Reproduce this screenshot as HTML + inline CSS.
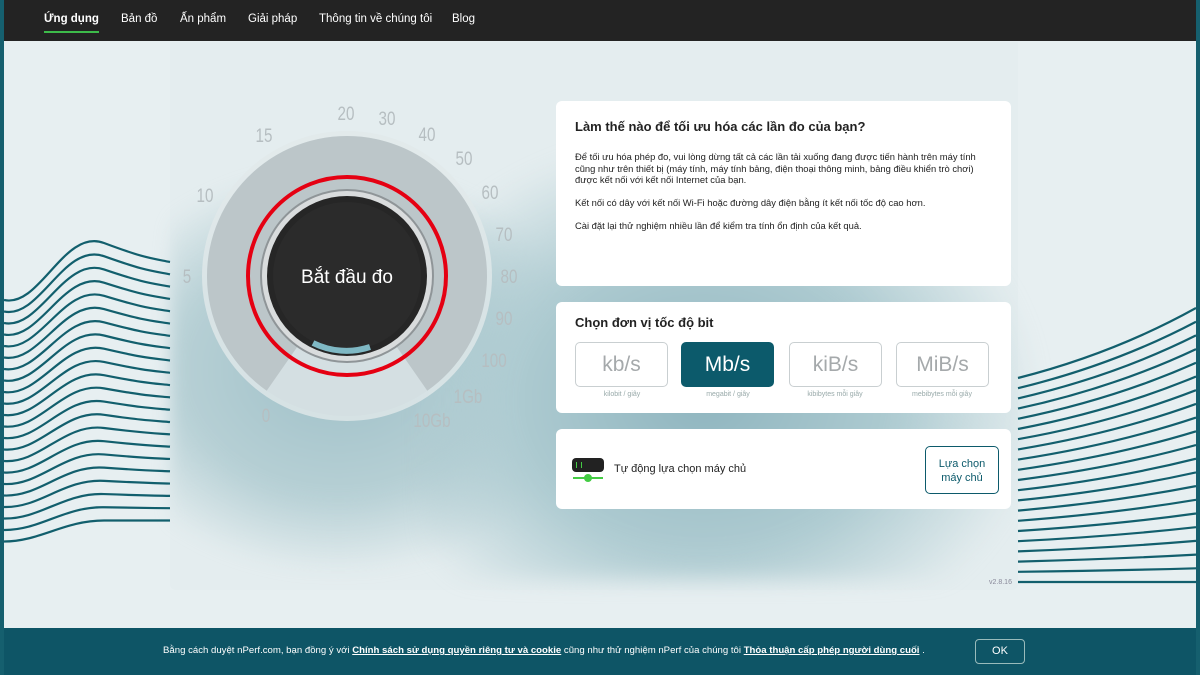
<!DOCTYPE html>
<html><head><meta charset="utf-8"><style>
*{margin:0;padding:0;box-sizing:border-box}
body{width:1200px;height:675px;overflow:hidden;background:#155f6e;font-family:"Liberation Sans",sans-serif;position:relative}
#page{position:absolute;left:4px;top:0;width:1192px;height:675px;background:#e7eff1;overflow:hidden}
#nav{position:absolute;left:0;top:0;width:1192px;height:41px;background:#232323;color:#fff;font-size:11.5px}
#nav span{position:absolute;top:13px}
#cookie{position:absolute;left:0;top:628px;width:1192px;height:47px;background:#0e5566;color:#fff;font-size:9.6px}
.card{position:absolute;background:#fff;border-radius:6px;left:552px;width:455px}
.u{position:absolute;top:40px;width:93px;height:45px;border:1px solid #c9cfd1;border-radius:5px;font-size:21px;color:#a5a9ab;text-align:center;line-height:44px}
.ul{position:absolute;top:89px;font-size:7px;color:#9aa;text-align:center;width:110px}
</style></head><body>
<div id="page">
<div style="position:absolute;left:166px;top:42px;width:848px;height:548px;background:#e4edef;border-radius:0 0 6px 6px"></div>
<div style="position:absolute;left:166px;top:170px;width:420px;height:400px;background:radial-gradient(ellipse at 40% 50%,#9fc0c8 0%,#b7d0d5 45%,rgba(228,237,239,0) 72%);filter:blur(8px)"></div>
<div style="position:absolute;left:420px;top:130px;width:620px;height:450px;background:radial-gradient(ellipse at 45% 60%,#8fb5bf 0%,#aecbd1 40%,rgba(228,237,239,0) 70%);filter:blur(10px)"></div>
<svg width="1192" height="675" style="position:absolute;left:0;top:0" id="sv">
<g transform="translate(-4,0)">
<circle cx="347" cy="276" r="145" fill="#e1e8ea" opacity=".8"/>
<circle cx="347" cy="276" r="140" fill="#d4dfe2"/>
<path d="M266.7 390.7 A140 140 0 1 1 427.3 390.7 L396.4 346.4 A86 86 0 1 0 297.6 346.4 Z" fill="#bcc6c9"/>
<g font-family="Liberation Sans Narrow,Liberation Sans,sans-serif" font-size="19" fill="#b6bec1" text-anchor="middle" style="font-stretch:condensed">
<text x="266" y="422" transform="translate(266 0) scale(.8 1) translate(-266 0)">0</text>
<text x="187" y="283" transform="translate(187 0) scale(.8 1) translate(-187 0)">5</text>
<text x="205" y="202" transform="translate(205 0) scale(.8 1) translate(-205 0)">10</text>
<text x="264" y="142" transform="translate(264 0) scale(.8 1) translate(-264 0)">15</text>
<text x="346" y="120" transform="translate(346 0) scale(.8 1) translate(-346 0)">20</text>
<text x="387" y="125" transform="translate(387 0) scale(.8 1) translate(-387 0)">30</text>
<text x="427" y="141" transform="translate(427 0) scale(.8 1) translate(-427 0)">40</text>
<text x="464" y="165" transform="translate(464 0) scale(.8 1) translate(-464 0)">50</text>
<text x="490" y="199" transform="translate(490 0) scale(.8 1) translate(-490 0)">60</text>
<text x="504" y="241" transform="translate(504 0) scale(.8 1) translate(-504 0)">70</text>
<text x="509" y="283" transform="translate(509 0) scale(.8 1) translate(-509 0)">80</text>
<text x="504" y="325" transform="translate(504 0) scale(.8 1) translate(-504 0)">90</text>
<text x="494" y="367" transform="translate(494 0) scale(.8 1) translate(-494 0)">100</text>
<text x="468" y="403" transform="translate(468 0) scale(.8 1) translate(-468 0)">1Gb</text>
<text x="432" y="427" transform="translate(432 0) scale(.8 1) translate(-432 0)">10Gb</text>
</g>
<circle cx="347" cy="276" r="99" fill="none" stroke="#e50012" stroke-width="4"/>
<circle cx="347" cy="276" r="86" fill="#d9dcdd" stroke="#8f9598" stroke-width="2"/>
<circle cx="347" cy="276" r="80" fill="#262626"/>
<circle cx="347" cy="276" r="74" fill="#2b2b2b"/>
<path d="M313 343 A75 75 0 0 0 370 347" fill="none" stroke="#7fb8c4" stroke-width="6"/>
<text x="347" y="283" fill="#fff" font-size="19" text-anchor="middle" font-family="Liberation Sans,sans-serif">Bắt đầu đo</text>
</g>
<g id="lines" fill="none" stroke="#125f6d" stroke-width="2.2"></g>
</svg>
<div id="nav"><span style="left:40px;font-weight:bold">Ứng dụng</span><div style="position:absolute;left:40px;top:31px;width:55px;height:2px;background:#3dbb4a"></div><span style="left:117px">Bản đồ</span><span style="left:176px">Ấn phẩm</span><span style="left:244px">Giải pháp</span><span style="left:315px">Thông tin về chúng tôi</span><span style="left:448px">Blog</span></div>
<div class="card" style="top:101px;height:185px;padding:18px 24px 18px 19px;color:#222">
<div style="font-weight:bold;font-size:13px">Làm thế nào để tối ưu hóa các lần đo của bạn?</div>
<div style="font-size:9.4px;line-height:11.5px;margin-top:17px">Để tối ưu hóa phép đo, vui lòng dừng tất cả các lần tải xuống đang được tiến hành trên máy tính cũng như trên thiết bị (máy tính, máy tính bảng, điện thoại thông minh, bảng điều khiển trò chơi) được kết nối với kết nối Internet của bạn.<br><br>Kết nối có dây với kết nối Wi-Fi hoặc đường dây điện bằng ít kết nối tốc độ cao hơn.<br><br>Cài đặt lại thử nghiệm nhiều lần để kiểm tra tính ổn định của kết quả.</div></div>
<div class="card" style="top:302px;height:111px">
<div style="position:absolute;left:19px;top:13px;font-weight:bold;font-size:13px;color:#222">Chọn đơn vị tốc độ bit</div>
<div class="u" style="left:19px">kb/s</div><div class="u" style="left:125px;background:#0c5a6b;border-color:#0c5a6b;color:#fff">Mb/s</div><div class="u" style="left:233px">kiB/s</div><div class="u" style="left:340px">MiB/s</div>
<div class="ul" style="left:11px">kilobit / giây</div><div class="ul" style="left:117px">megabit / giây</div><div class="ul" style="left:224px">kibibytes mỗi giây</div><div class="ul" style="left:331px">mebibytes mỗi giây</div></div>
<div class="card" style="top:429px;height:80px">
<div style="position:absolute;left:16px;top:29px;width:32px;height:14px;background:#222;border-radius:4px"></div>
<div style="position:absolute;left:20px;top:33px;width:6px;height:6px;border-left:1px solid #4c4;border-right:1px solid #4c4"></div>
<div style="position:absolute;left:17px;top:48px;width:30px;height:2px;background:#4c4"></div>
<div style="position:absolute;left:28px;top:45px;width:8px;height:8px;border-radius:50%;background:#4c4"></div>
<div style="position:absolute;left:58px;top:34px;font-size:11px;color:#222">Tự động lựa chọn máy chủ</div>
<div style="position:absolute;left:369px;top:17px;width:74px;height:48px;border:1px solid #0c5a6b;border-radius:5px;color:#0c5a6b;font-size:11px;text-align:center;padding-top:10px;line-height:14px">Lựa chọn<br>máy chủ</div></div>
<div style="position:absolute;left:985px;top:579px;font-size:7px;color:#889">v2.8.16</div>
<div id="cookie"><span style="position:absolute;left:159px;top:17px;white-space:nowrap">Bằng cách duyệt nPerf.com, bạn đồng ý với <b><u>Chính sách sử dụng quyền riêng tư và cookie</u></b> cũng như thử nghiệm nPerf của chúng tôi <b><u>Thỏa thuận cấp phép người dùng cuối</u></b> .</span>
<div style="position:absolute;left:971px;top:11px;width:50px;height:25px;border:1px solid #9bb;border-radius:4px;text-align:center;line-height:23px;font-size:11px">OK</div></div>
</div>
<script>
var g=document.getElementById('lines'),s='';
for(var i=0;i<22;i++){var t=i/21,ys=300+i*11.5,ye=258+i*12.5,k=1-t;
s+='<path d="M0 '+ys+' C36 '+(ys+8*k)+' 60 '+(ye-30*k)+' 100 '+(ye-15*k)+' S146 '+ye+' 166 '+(ye+4*k)+'"/>';}
for(var i=0;i<21;i++){var a=378+i*10.2,b=308+i*13.7;
s+='<path d="M1014 '+a+' Q1110 '+(a-(a-b)*0.35)+' 1192 '+b+'"/>';}
g.innerHTML=s;
</script>
</body></html>
